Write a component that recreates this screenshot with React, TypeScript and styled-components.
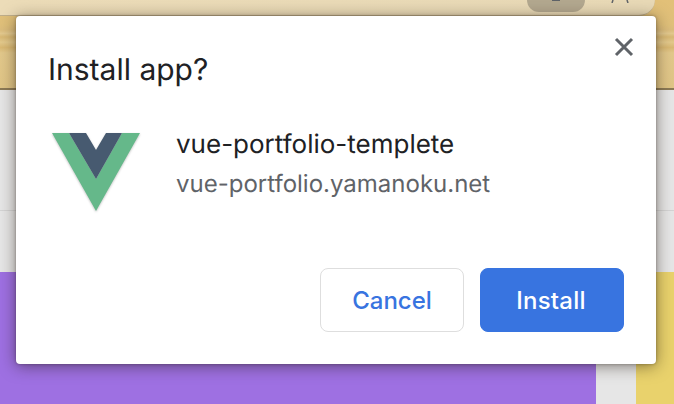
import React from "react";
import styled, { createGlobalStyle } from "styled-components";

const GlobalStyle = createGlobalStyle`
  html, body {
    margin: 0;
    padding: 0;
    width: 674px;
    height: 404px;
    overflow: hidden;
    font-family: Inter, "Liberation Sans", sans-serif;
    text-rendering: geometricPrecision;
  }
  * {
    box-sizing: border-box;
  }
`;

const Page = styled.div`
  position: relative;
  width: 674px;
  height: 404px;
  display: flex;
  flex-direction: column;
  background: #e6e6e6;
`;

const WoodBand = styled.div`
  height: 90px;
  border-bottom: 2px solid #8c7a55;
  background: linear-gradient(
    180deg,
    #e2c078 0,
    #e0c07a 28%,
    #dcbd7c 34%,
    #e3c98e 38%,
    #d9b974 42%,
    #e3c98c 48%,
    #dab973 54%,
    #e2c88b 60%,
    #e0c586 100%
  );
`;

const Toolbar = styled.div`
  width: 655px;
  height: 16px;
  padding-left: 527px;
  background: linear-gradient(90deg, #ecdcb8, #e8d9b6);
  border-bottom-right-radius: 18px;
  border-bottom: 1px solid #bfae8a;
  display: flex;
  align-items: flex-start;
`;

const ProfilePill = styled.div`
  width: 58px;
  height: 12px;
  display: flex;
  justify-content: center;
  background: #b3a88f;
  border-bottom-left-radius: 16px;
  border-bottom-right-radius: 16px;
`;

const ProfileGlyph = styled.div`
  width: 8px;
  height: 1px;
  background: #5f6368;
`;

const StarTips = styled.svg`
  flex: none;
  width: 20px;
  height: 3px;
  margin-left: 25px;
`;

const GreyArea = styled.div`
  height: 182px;
  padding-top: 120px;
`;

const Divider = styled.div`
  height: 1px;
  background: #d4d4d4;
`;

const CardRow = styled.div`
  flex: 1;
  display: flex;
`;

const PurpleCard = styled.div`
  width: 596px;
  background: #9e70e2;
`;

const Gap = styled.div`
  width: 40px;
`;

const YellowCard = styled.div`
  flex: 1;
  background: #e9d26c;
`;

const Dialog = styled.div`
  position: absolute;
  left: 16px;
  top: 16px;
  width: 640px;
  height: 348px;
  padding: 38px 32px 32px 33px;
  display: flex;
  flex-direction: column;
  background: #fff;
  border-radius: 4px;
  box-shadow: 0 2px 16px rgba(30, 20, 10, 0.5), 0 0 3px rgba(30, 20, 10, 0.35);
`;

const CloseButton = styled.button`
  position: absolute;
  top: 21px;
  right: 22px;
  width: 20px;
  height: 20px;
  padding: 0;
  border: 0;
  background: none;
  color: #5f6368;
  display: flex;
`;

const Title = styled.h1`
  margin: 0 0 0 -1px;
  font-size: 30px;
  line-height: 32px;
  font-weight: 400;
  color: #202124;
`;

const AppRow = styled.div`
  margin-top: 42px;
  display: flex;
  align-items: flex-start;
`;

const AppLogo = styled.svg`
  flex: none;
  width: 96px;
  height: 84px;
  margin-top: 3px;
  margin-right: 31px;
  filter: drop-shadow(0 1px 1px rgba(0, 0, 0, 0.25));
`;

const AppInfo = styled.div`
  padding-top: 1px;
  display: flex;
  flex-direction: column;
  gap: 7px;
`;

const AppName = styled.div`
  font-size: 26px;
  line-height: 32px;
  color: #202124;
`;

const AppUrl = styled.div`
  font-size: 24px;
  line-height: 32px;
  color: #5f6368;
`;

const Actions = styled.div`
  margin-top: auto;
  display: flex;
  justify-content: flex-end;
  gap: 16px;
`;

const Button = styled.button<{ $primary?: boolean }>`
  width: 144px;
  height: 64px;
  padding: 0 ${(p) => (p.$primary ? "2px" : "0")} 0 0;
  border-radius: 8px;
  font-family: inherit;
  font-size: 24px;
  font-weight: 500;
  letter-spacing: ${(p) => (p.$primary ? "0.2px" : "0")};
  border: 1px solid ${(p) => (p.$primary ? "#3874e0" : "#dedede")};
  background: ${(p) => (p.$primary ? "#3874e0" : "#fff")};
  color: ${(p) => (p.$primary ? "#fff" : "#3874e0")};
`;

const App: React.FC = () => {
  return (
    <Page>
      <GlobalStyle />
      <WoodBand>
        <Toolbar>
          <ProfilePill>
            <ProfileGlyph />
          </ProfilePill>
          <StarTips viewBox="0 0 20 3">
            <path d="M2 3 L3 0 M18 3 L17 0" stroke="#5f6368" strokeWidth="1.5" fill="none" />
          </StarTips>
        </Toolbar>
      </WoodBand>
      <GreyArea>
        <Divider />
      </GreyArea>
      <CardRow>
        <PurpleCard />
        <Gap />
        <YellowCard />
      </CardRow>
      <Dialog>
        <CloseButton aria-label="Close">
          <svg width="20" height="20" viewBox="0 0 20 20">
            <path d="M2 2 L18 18 M18 2 L2 18" stroke="currentColor" strokeWidth="3" fill="none" />
          </svg>
        </CloseButton>
        <Title>Install app?</Title>
        <AppRow>
          <AppLogo viewBox="0 0 96 84">
            <path d="M3 2 H20 L47 48 L73 2 H91 L47 80 Z" fill="#65b88a" />
            <path d="M20 2 H37 L47 19 L57 2 H73 L47 48 Z" fill="#475a70" />
          </AppLogo>
          <AppInfo>
            <AppName>vue-portfolio-templete</AppName>
            <AppUrl>vue-portfolio.yamanoku.net</AppUrl>
          </AppInfo>
        </AppRow>
        <Actions>
          <Button>Cancel</Button>
          <Button $primary>Install</Button>
        </Actions>
      </Dialog>
    </Page>
  );
};

export default App;
